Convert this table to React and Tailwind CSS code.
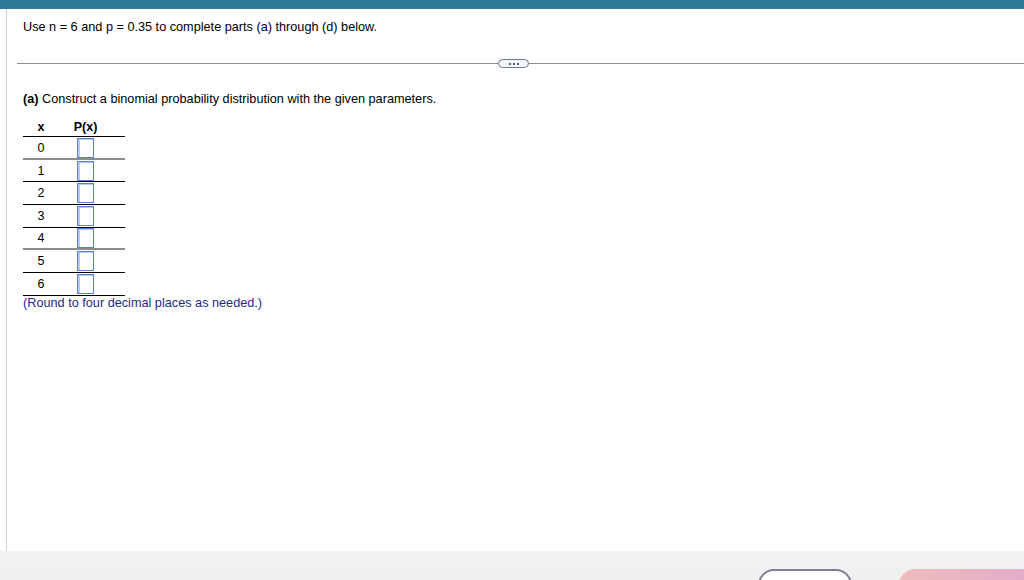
const rows = [
  { x: 0, h: 'h-[23px]', line: 'border-b-2 border-[#8c8c8c]' },
  { x: 1, h: 'h-[22px]', line: 'border-b border-black' },
  { x: 2, h: 'h-[23px]', line: 'border-b border-black' },
  { x: 3, h: 'h-[23px]', line: 'border-b border-black' },
  { x: 4, h: 'h-[22px]', line: 'border-b-2 border-[#8c8c8c]' },
  { x: 5, h: 'h-[23px]', line: 'border-b border-black' },
  { x: 6, h: 'h-[23px]', line: 'border-b border-black' },
];

function AnswerBox() {
  return (
    <span className="block w-[17px] h-[20px] border border-[#5a7fd0] shadow-[inset_2px_1px_0_#b7c9ee] bg-white"></span>
  );
}

export default function App() {
  return (
    <div className="w-[1024px] h-[580px] flex flex-col overflow-hidden bg-white text-black font-['Liberation_Sans',Arial,sans-serif]">
      <div className="h-[9px] flex-none bg-[#2f7898]"></div>

      <div className="flex-1 flex min-h-0">
        <div className="w-[6px] flex-none"></div>
        <main className="flex-1 border-l border-[#cbd3db] pl-[10px] flex flex-col">
          <p className="pl-[6px] pt-[10px] text-[12.7px] leading-[16px]">
            Use n = 6 and p = 0.35 to complete parts (a) through (d) below.
          </p>

          <div className="relative mt-[28px] h-[1px] bg-[#8a8e98]">
            <button className="absolute left-[481px] -top-[4px] w-[31px] h-[9px] rounded-full border border-[#6c7788] bg-[#f4f6f9] flex items-center justify-center gap-[2px]">
              <span className="w-[2px] h-[2px] bg-[#556070]"></span>
              <span className="w-[2px] h-[2px] bg-[#556070]"></span>
              <span className="w-[2px] h-[2px] bg-[#556070]"></span>
            </button>
          </div>

          <div className="pl-[6px]">
            <p className="mt-[27px] text-[12.7px] leading-[16px]">
              <span className="font-bold">(a)</span> Construct a binomial probability distribution with the given parameters.
            </p>

            <div className="mt-[13px] w-[102px] text-[12.5px]">
              <div className="flex h-[17px] items-start border-b border-black font-bold leading-[14px]">
                <div className="w-[36px] text-center">x</div>
                <div className="w-[53px] text-center">P(x)</div>
              </div>
              {rows.map((r) => (
                <div key={r.x} className={`flex items-center box-border ${r.h} ${r.line}`}>
                  <div className="w-[36px] text-center leading-[14px]">{r.x}</div>
                  <div className="w-[53px] flex justify-center">
                    <AnswerBox />
                  </div>
                </div>
              ))}
            </div>

            <p className="text-[12.7px] leading-[15px] text-[#1b2a8c]">
              (Round to four decimal places as needed.)
            </p>
          </div>
        </main>
      </div>

      <footer className="h-[29px] flex-none bg-gradient-to-b from-[#f2f2f2] to-[#efefef] flex items-start pt-[18px] pl-[758px] gap-[47px] overflow-hidden">
        <button className="flex-none w-[94px] h-[32px] rounded-full border-2 border-[#7b8190] bg-white text-[14px] font-bold text-[#444b58] pt-[1px] leading-[18px]">
          Clear all
        </button>
        <button className="flex-none w-[140px] h-[32px] rounded-full bg-gradient-to-r from-[#efbbbb] to-[#e3aacb] text-[14px] font-bold text-white pt-[1px] leading-[18px] text-left pl-[14px]">
          Check answer
        </button>
      </footer>
    </div>
  );
}
